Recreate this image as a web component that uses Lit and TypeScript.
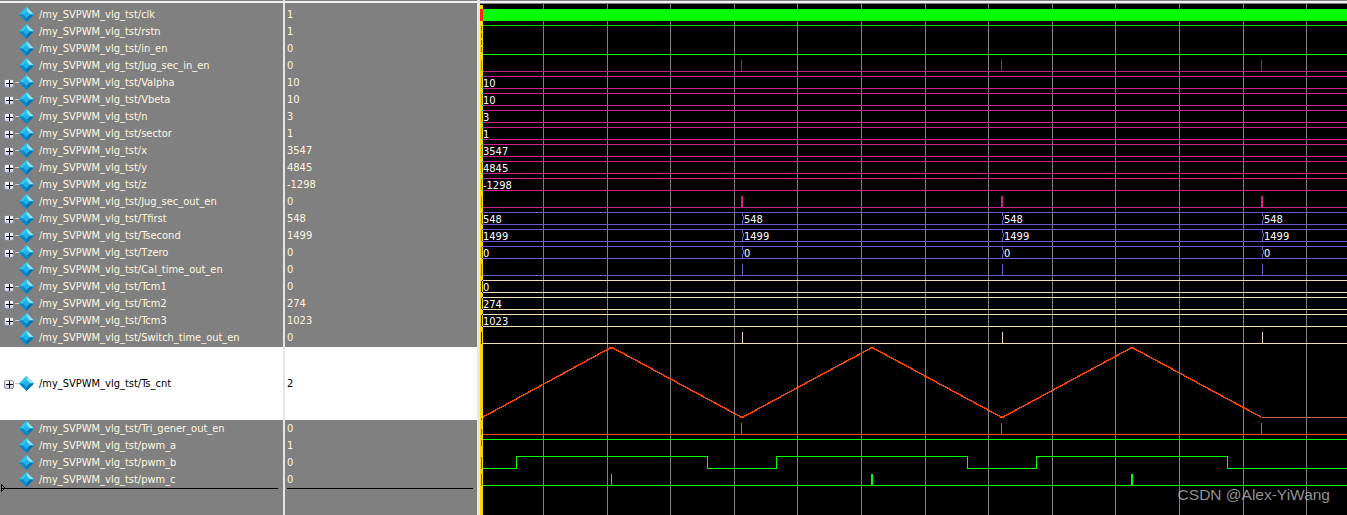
import { LitElement, html, css, svg } from "lit";
import { customElement } from "lit/decorators.js";

type Row = { name: string; value: string; bus?: boolean; tall?: boolean };

const P = "/my_SVPWM_vlg_tst/";
const ROWS: Row[] = [
  { name: "clk", value: "1" },
  { name: "rstn", value: "1" },
  { name: "in_en", value: "0" },
  { name: "Jug_sec_in_en", value: "0" },
  { name: "Valpha", value: "10", bus: true },
  { name: "Vbeta", value: "10", bus: true },
  { name: "n", value: "3", bus: true },
  { name: "sector", value: "1", bus: true },
  { name: "x", value: "3547", bus: true },
  { name: "y", value: "4845", bus: true },
  { name: "z", value: "-1298", bus: true },
  { name: "Jug_sec_out_en", value: "0" },
  { name: "Tfirst", value: "548", bus: true },
  { name: "Tsecond", value: "1499", bus: true },
  { name: "Tzero", value: "0", bus: true },
  { name: "Cal_time_out_en", value: "0" },
  { name: "Tcm1", value: "0", bus: true },
  { name: "Tcm2", value: "274", bus: true },
  { name: "Tcm3", value: "1023", bus: true },
  { name: "Switch_time_out_en", value: "0" },
  { name: "Ts_cnt", value: "2", bus: true, tall: true },
  { name: "Tri_gener_out_en", value: "0" },
  { name: "pwm_a", value: "1" },
  { name: "pwm_b", value: "0" },
  { name: "pwm_c", value: "0" },
];

const GREEN = "#00ff00";
const PINK = "#d4208c";
const BLUE = "#6a5acd";
const TAN = "#f5deb3";
const ORANGE = "#ff4500";
const EDGES = [742, 1002, 1262];

const hline = (y: number, c: string, x1 = 483, x2 = 1347) =>
  svg`<line x1=${x1} x2=${x2} y1=${y + 0.5} y2=${y + 0.5} stroke=${c} />`;
const vline = (x: number, y1: number, y2: number, c: string, w = 1) =>
  svg`<rect x=${x} y=${y1} width=${w} height=${y2 - y1} fill=${c} />`;
const label = (x: number, y: number, t: string) =>
  svg`<text class="wv" x=${x} y=${y}>${t}</text>`;

function busRow(top: number, c: string, text: string, edge: string, transitions = false) {
  const bottom = top + 12;
  return svg`
    ${hline(top, c)}${hline(bottom, c)}
    ${vline(482, top, top + 1, edge)}${vline(481, top + 1, bottom, edge)}${vline(482, bottom, bottom + 1, edge)}
    ${label(483, top + 11, text)}
    ${transitions
      ? EDGES.map(
          (x) => svg`${vline(x, top, top + 4, c)}${vline(x + 1, top + 4, top + 8, c)}${vline(x, top + 8, bottom, c)}
          ${label(x + 2, top + 11, text)}`
        )
      : ""}`;
}

function enableRow(low: number, c: string, w: number, edge: string) {
  return svg`${hline(low, c)}${EDGES.map((x) => vline(w > 1 ? x - 1 : x, low - 11, low, c, w))}${vline(481, low - 11, low + 1, edge)}`;
}

function waves() {
  const grid: number[] = [];
  for (let k = 0; k < 13; k++) grid.push(Math.round(543 + 63.6 * k));
  const pwm = "483,468.5 516.5,468.5 516.5,456.5 707.5,456.5 707.5,468.5 776.5,468.5 776.5,456.5 967.5,456.5 967.5,468.5 1036.5,468.5 1036.5,456.5 1227.5,456.5 1227.5,468.5 1347,468.5";
  return svg`
    <svg class="wave" width="867" height="515" viewBox="480 0 867 515" shape-rendering="crispEdges">
      ${grid.map((x) => vline(x, 4, 515, "#808080"))}
      ${vline(480, 5, 515, "#ffd700", 3)}

      ${vline(483, 9, 21, GREEN, 864)}
      ${vline(480, 9, 21, "#ff2a00", 3)}
      ${hline(25, "#00d000")}
      ${hline(54, GREEN)}
      <line x1="481.5" x2="481.5" y1="26" y2="54" stroke="#ff2a00" stroke-dasharray="5 2" />
      ${hline(71, "#c0208a")}
      ${vline(741, 60, 71, "#a02080")}
      ${vline(1001, 60, 71, "#a02080")}
      ${vline(1261, 60, 71, "#a02080")}
      ${vline(481, 60, 71, "#00c8a0")}

      ${busRow(76, PINK, "10", "#00c8a0")}
      ${busRow(93, PINK, "10", "#00c8a0")}
      ${busRow(110, PINK, "3", "#00c8a0")}
      ${busRow(127, PINK, "1", "#00c8a0")}
      ${busRow(144, PINK, "3547", "#00c8a0")}
      ${busRow(161, PINK, "4845", "#00c8a0")}
      ${busRow(178, PINK, "-1298", "#00c8a0")}
      ${enableRow(207, PINK, 2, "#00c8a0")}

      ${busRow(212, BLUE, "548", BLUE, true)}
      ${busRow(229, BLUE, "1499", BLUE, true)}
      ${busRow(246, BLUE, "0", BLUE, true)}
      ${enableRow(275, BLUE, 1, BLUE)}

      ${busRow(280, TAN, "0", "#0000e0")}
      ${busRow(297, TAN, "274", "#0000e0")}
      ${busRow(314, TAN, "1023", "#0000e0")}
      ${hline(343, TAN)}
      ${EDGES.map((x) => vline(x, 332, 343, TAN))}
      ${vline(481, 332, 344, "#0000e0")}

      <polyline fill="none" stroke=${ORANGE} stroke-width="1.4"
        points="483,417 610,348 613,348 741,417 743,417 871,348 873,348 1001,417 1003,417 1131,348 1133,348 1261,417" />
      ${hline(417, "#b86a50", 1262)}
      ${vline(481, 418, 420, "#00a040")}

      ${hline(434, ORANGE)}
      ${EDGES.map((x) => vline(x - 1, 423, 434, "#e05020"))}
      ${vline(481, 429, 435, "#00a040")}
      ${hline(439, GREEN)}
      ${vline(481, 440, 446, "#ff2a00")}
      <polyline fill="none" stroke=${GREEN} points=${pwm} />
      ${vline(481, 457, 469, "#ff2a00")}
      ${hline(485, GREEN)}
      ${vline(611, 474, 485, GREEN)}
      ${vline(871, 474, 485, GREEN, 2)}
      ${vline(1131, 474, 485, GREEN, 2)}
      ${vline(481, 474, 486, "#ff2a00")}
    </svg>`;
}

@customElement("app-root")
export class AppRoot extends LitElement {
  static styles = css`
    :host {
      display: block;
      width: 1347px;
      height: 515px;
      overflow: hidden;
      background: #808080;
      font-family: "DejaVu Sans Condensed", "DejaVu Sans", sans-serif;
      font-stretch: condensed;
      font-size: 11px;
    }
    .layout {
      display: grid;
      grid-template-columns: 283px 2px 192px 3px 867px;
      height: 515px;
    }
    .divider {
      background: #e6e6e6;
    }
    .pane {
      position: relative;
      border-top: 2px solid #f0f0f0;
      margin-top: 1px;
      padding-top: 3px;
      min-width: 0;
    }
    .row {
      display: flex;
      align-items: center;
      height: 17px;
      color: #fff7e0;
      white-space: nowrap;
    }
    .row.tall {
      height: 73px;
      margin-top: 1px;
      background: #fff;
      color: #000;
    }
    .names .row {
      padding-left: 4px;
    }
    .values .row {
      padding-left: 2px;
    }
    .expander {
      flex: none;
      width: 10px;
      height: 9px;
      margin-right: 1px;
      margin-top: 1px;
      box-sizing: border-box;
      border: 1px solid #8d8d9a;
      border-radius: 2px;
      background: linear-gradient(#fff, #cfd3e8);
      display: grid;
      place-items: center;
    }
    .connector {
      flex: none;
      width: 4px;
      height: 1px;
      background: #c8c8c8;
    }
    .noexp {
      flex: none;
      width: 15px;
    }
    .icon {
      flex: none;
      display: block;
      width: 15px;
      height: 15px;
    }
    .name {
      margin-left: 5px;
    }
    .rule {
      position: absolute;
      top: 485px;
      height: 1px;
      background: #000;
    }
    .names .rule {
      left: 2px;
      right: 5px;
    }
    .values .rule {
      left: 2px;
      right: 4px;
    }
    .marker {
      position: absolute;
      left: 0;
      top: 481px;
    }
    .wave-pane {
      background: #000;
      position: relative;
      overflow: hidden;
    }
    .wave {
      display: block;
    }
    .topcap {
      position: absolute;
      left: 0;
      right: 0;
      top: 0;
      height: 4px;
      background: linear-gradient(#808080 0 1px, #f0f0f0 1px 3px, #808080 3px 4px);
    }
    .wv {
      fill: #fff;
      font-family: "DejaVu Sans Condensed", "DejaVu Sans", sans-serif;
      font-size: 11px;
    }
    .mark {
      position: absolute;
      right: 17px;
      bottom: 11px;
      color: rgba(190, 190, 190, 0.78);
      font-family: "Liberation Sans", Arial, sans-serif;
      font-stretch: normal;
      font-size: 15.5px;
      line-height: 18px;
    }
  `;

  private icon() {
    return html`<svg class="icon" viewBox="0 0 15 15" shape-rendering="geometricPrecision">
      <path d="M7.5 0 15 7.5 7.5 15 0 7.5Z" fill="#12a8e0" />
      <path d="M7.5 0 15 7.5 11 7.5 7.5 4Z" fill="#8fe4fa" />
      <path d="M7.5 0 0 7.5 4 7.5 7.5 4Z" fill="#35c4ee" />
      <path d="M7.5 4 11 7.5 7.5 11 4 7.5Z" fill="#1cb4ea" />
      <path d="M0 7.5 7.5 15 7.5 11 4 7.5Z" fill="#0a86c6" />
      <path d="M15 7.5 7.5 15 7.5 11 11 7.5Z" fill="#0670ae" />
    </svg>`;
  }

  render() {
    return html`<div class="layout">
      <div class="pane names">
        ${ROWS.map(
          (r) => html`<div class="row ${r.tall ? "tall" : ""}">
            ${r.bus
              ? html`<span class="expander"><svg width="7" height="7" viewBox="0 0 7 7" shape-rendering="crispEdges"><path d="M0 3h7v1H0zM3 0h1v7H3z" fill="#000" /></svg></span><span class="connector"></span>`
              : html`<span class="noexp"></span>`}
            ${this.icon()}
            <span class="name">${P + r.name}</span>
          </div>`
        )}
        <div class="rule"></div>
        <svg class="marker" width="6" height="8" viewBox="0 0 6 8"><path d="M1.5 .5 5 4 1.5 7.5Z" fill="none" stroke="#000" /></svg>
      </div>
      <div class="divider"></div>
      <div class="pane values">
        ${ROWS.map((r) => html`<div class="row ${r.tall ? "tall" : ""}">${r.value}</div>`)}
        <div class="rule"></div>
      </div>
      <div class="divider"></div>
      <div class="wave-pane">
        ${waves()}
        <div class="topcap"></div>
        <div class="mark">CSDN @Alex-YiWang</div>
      </div>
    </div>`;
  }
}
